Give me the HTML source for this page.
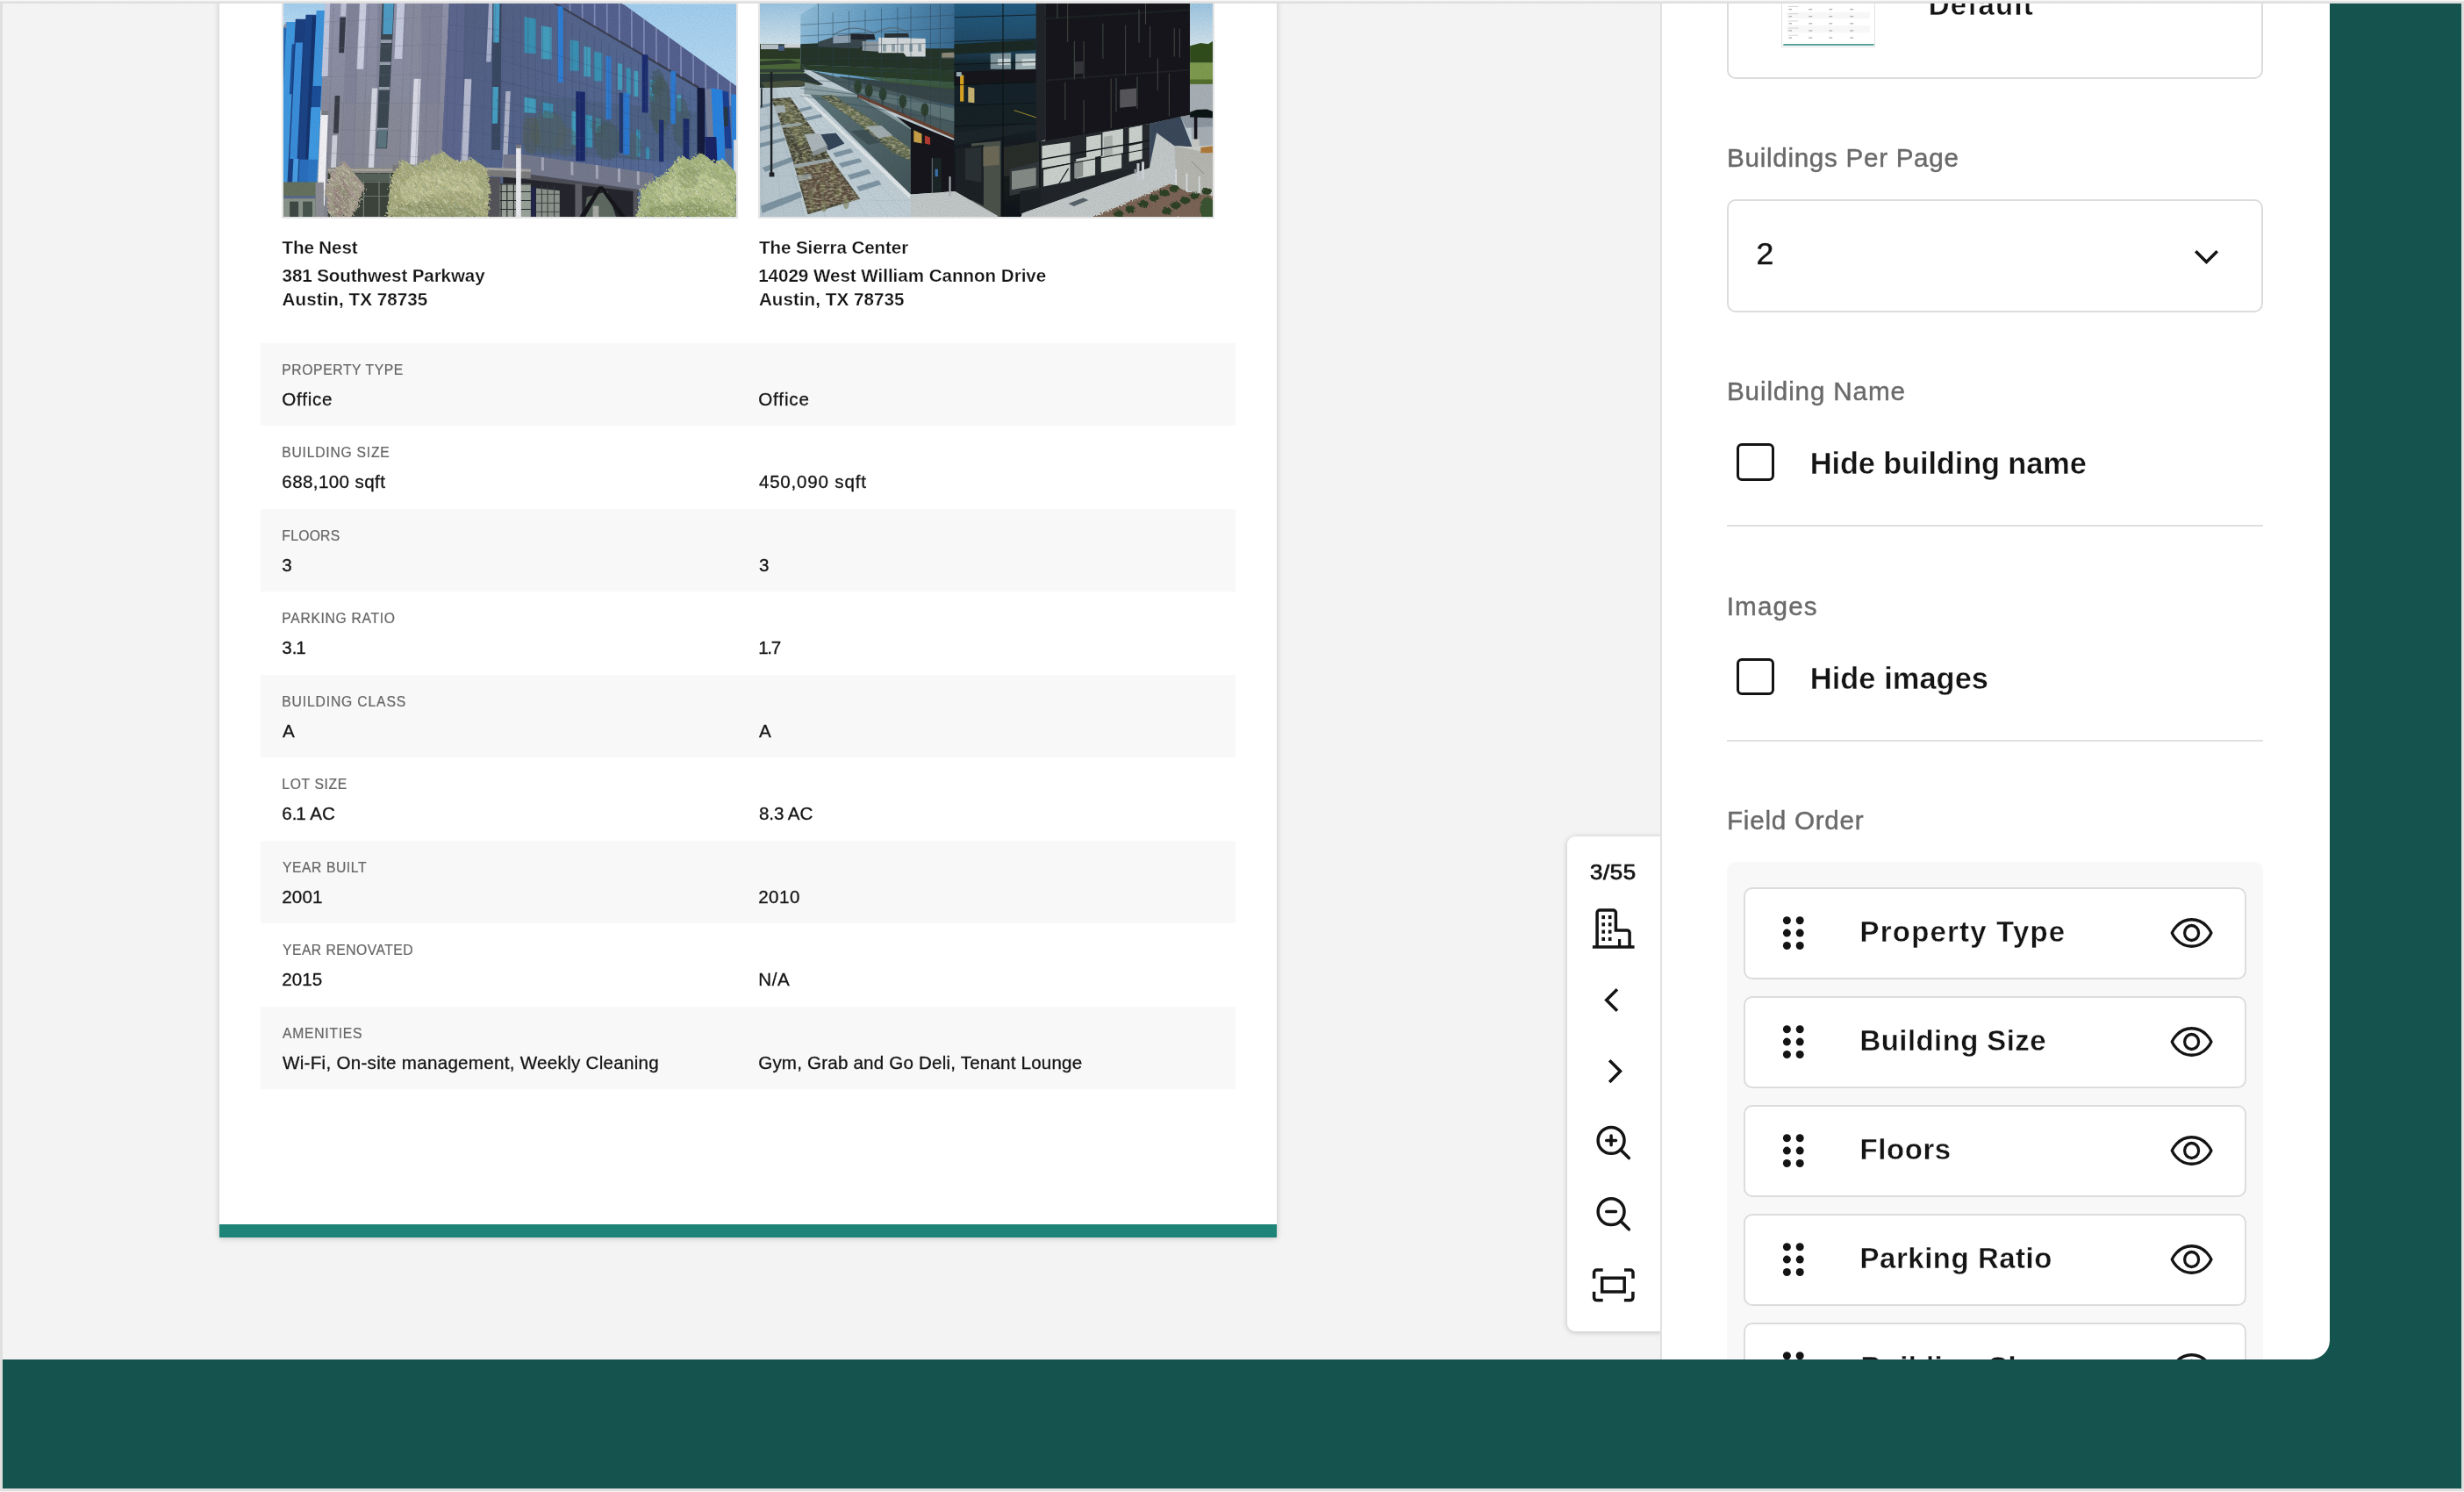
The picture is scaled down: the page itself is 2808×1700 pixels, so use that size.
<!DOCTYPE html>
<html lang="en"><head><meta charset="utf-8">
<title>Building comparison</title>
<style>
html,body{margin:0;padding:0}
body{width:2808px;height:1700px;position:relative;overflow:hidden;background:#dfdfdf;font-family:"Liberation Sans",sans-serif;color:#141414}
.a{position:absolute}
.t{position:absolute;white-space:nowrap;line-height:1}
.clip{position:absolute;overflow:hidden}
.in{position:absolute;left:0;top:0;width:2808px;height:1700px}
#green{left:3px;top:4px;width:2802px;height:1692px;background:#15544e}
#app{left:3px;top:4px;width:1889px;height:1545px;background:#f3f3f3}
#app>.in{left:-3px;top:-4px}
#panel{left:1892px;top:4px;width:763px;height:1545px;background:#fff;border-bottom-right-radius:22px}
#panel>.in{left:-1892px;top:-4px}
#pline{left:1891.6px;top:4px;width:2px;height:1545px;background:#e1e1e1}
#page{left:250px;top:-40px;width:1205px;height:1450px;background:#fff;box-shadow:0 1px 7px rgba(0,0,0,.2)}
#teal{left:250px;top:1395px;width:1205px;height:15px;background:#1f8478}
.row{left:297px;width:1111px;height:94.5px;background:#f8f8f8}
.frame{top:-40px;height:285px;width:516px;border:2px solid #e5e5e5;background:#8a93a8;overflow:hidden}
.frame svg{position:absolute;left:0;top:42px;display:block}
.box{border:2px solid #dcdcdc;border-radius:10px;background:#fff;box-sizing:border-box}
.cb{width:43.3px;height:42.6px;left:1979.2px;border:3.7px solid #141414;border-radius:6px;box-sizing:border-box}
.hr{left:1968px;width:611px;height:2px;background:#e0e0e0}
#tool{left:1786px;top:953px;width:120px;height:564px;background:#fff;border-radius:9px;box-shadow:0 1px 6px rgba(0,0,0,.22)}
svg.ic{position:absolute;left:0;top:0;overflow:visible}

</style></head>
<body>
<div class="a" style="left:0;top:0;width:2808px;height:4px;background:linear-gradient(#fafafa 0,#f4f4f4 22%,#e4e4e4 45%,#dedede 62%,#dedede 100%)"></div>
<div class="a" style="left:0;top:1699px;width:2808px;height:1px;background:#f4f4f4"></div>
<div class="a" id="green"></div>
<div class="clip" id="app"><div class="in">
  <div class="a" id="page"></div>
  <div class="a" id="teal"></div>
  <div class="a row" style="top:390.6px"></div>
  <div class="a row" style="top:579.6px"></div>
  <div class="a row" style="top:768.6px"></div>
  <div class="a row" style="top:957.6px"></div>
  <div class="a row" style="top:1146.6px"></div>
  <div class="a frame" style="left:321px"><svg width="516" height="243" viewBox="0 0 516 243">
<defs><linearGradient id="p1a" x1="0" y1="0" x2="0" y2="1"><stop offset="0" stop-color="#9194ad"/><stop offset="1" stop-color="#84868f"/></linearGradient><linearGradient id="p1b" x1="0" y1="0" x2="1" y2="0.4"><stop offset="0" stop-color="#566184"/><stop offset="1" stop-color="#546c9a"/></linearGradient><linearGradient id="p1s" x1="0" y1="0" x2="0" y2="1"><stop offset="0" stop-color="#a3cff0"/><stop offset="1" stop-color="#bcdff7"/></linearGradient><filter id="p1f" x="-5%" y="-5%" width="110%" height="110%"><feGaussianBlur stdDeviation="0.7"/></filter><filter id="p1n" x="0" y="0" width="100%" height="100%"><feTurbulence type="fractalNoise" baseFrequency="0.35" numOctaves="2" seed="3" result="n"/><feDisplacementMap in="SourceGraphic" in2="n" scale="9"/></filter><filter id="p1g" x="0" y="0" width="100%" height="100%"><feTurbulence type="fractalNoise" baseFrequency="0.9" numOctaves="2" seed="5"/><feColorMatrix type="matrix" values="0 0 0 0 0  0 0 0 0 0  0 0 0 0 0  1.2 0 0 0 -0.35"/></filter><filter id="p1m" x="0" y="0" width="100%" height="100%"><feTurbulence type="fractalNoise" baseFrequency="0.22" numOctaves="3" seed="2"/><feColorMatrix type="matrix" values="0 0 0 0 0.30  0 0 0 0 0.36  0 0 0 0 0.20  0 2.6 0 0 -1.05"/></filter><filter id="p1m2" x="0" y="0" width="100%" height="100%"><feTurbulence type="fractalNoise" baseFrequency="0.3" numOctaves="3" seed="9"/><feColorMatrix type="matrix" values="0 0 0 0 0.86  0 0 0 0 0.87  0 0 0 0 0.66  2.6 0 0 0 -1.15"/></filter></defs>
<g filter="url(#p1f)">
<rect x="-5" y="-5" width="526" height="253" fill="url(#p1a)"/>
<polygon points="73.3,-0.3 86.7,-0.3 80.8,187.1 67.4,187.1" fill="#83869c"/>
<polygon points="107.6,-0.3 112.6,-0.3 108.4,187.1 104.3,187.1" fill="#84879c"/>
<polygon points="139.5,-0.3 157.9,-0.3 148.7,187.1 134.4,187.1" fill="#8b8da1"/>
<polygon points="157.9,-0.3 181.3,-0.3 176.3,187.1 156.2,187.1" fill="#81849b"/>
<polygon points="52.3,113.3 179.7,113.3 179.7,187.1 52.3,187.1" fill="#8b8c99" opacity=".55"/>
<polygon points="188.9,-0.3 281.9,-0.3 281.9,197.1 179.7,187.9" fill="url(#p1b)"/>
<rect x="190" y="-5" width="330" height="253" fill="url(#p1b)"/>
<polygon points="188.9,-0.3 206.5,-0.3 203.1,187.1 179.7,187.9" fill="#5f6890"/>
<polygon points="-3.0,-4.0 50.3,-4.0 50.3,10.2 38.9,7.7 37.2,14.4 27.2,12.8 25.5,18.6 15.4,17.8 13.8,22.8 3.7,21.1 -3.0,29.5" fill="url(#p1s)"/>
<polygon points="-6.4,27.8 4.5,27.8 -4.2,203.8 -15.1,203.8" fill="#2a6cb8"/>
<polygon points="-6.4,103.3 2.0,103.3 -3.0,203.8 -11.3,203.8" fill="#1a3d7e"/>
<polygon points="3.7,21.1 13.8,21.1 4.7,203.8 -5.4,203.8" fill="#3f9ae2"/>
<polygon points="9.7,46.3 15.4,46.3 12.6,103.3 6.9,103.3" fill="#1d4f9a"/>
<polygon points="13.8,17.8 25.8,17.8 16.6,203.8 4.5,203.8" fill="#1a3f82"/>
<polygon points="13.8,44.6 22.1,44.6 15.6,177.0 7.2,177.0" fill="#3b8fdc"/>
<polygon points="11.4,177.0 20.5,177.0 19.1,203.8 10.1,203.8" fill="#4a9fe6"/>
<polygon points="25.5,12.8 37.7,12.8 28.3,203.8 16.0,203.8" fill="#1c4488"/>
<polygon points="33.0,14.4 37.7,14.4 28.3,203.8 23.6,203.8" fill="#173670"/>
<polygon points="18.5,177.8 30.5,177.8 29.2,203.8 17.2,203.8" fill="#2c6fc0"/>
<polygon points="37.7,8.1 48.1,8.1 38.4,203.8 28.0,203.8" fill="#3c95de"/>
<polygon points="33.0,94.0 43.1,94.0 41.9,118.3 31.8,118.3" fill="#1d4f9a"/>
<polygon points="31.4,118.3 41.9,118.3 39.0,177.8 28.4,177.8" fill="#3f9be4"/>
<polygon points="28.8,177.8 38.9,177.8 37.6,203.8 27.6,203.8" fill="#2e78c6"/>
<polygon points="-4.7,203.5 38.9,203.5 38.9,244.0 -4.7,244.0" fill="#66735f"/>
<polygon points="-4.7,218.9 36.4,218.9 36.4,222.2 -4.7,222.2" fill="#5a6a8a"/>
<polygon points="-4.7,222.2 36.4,222.2 36.4,244.0 -4.7,244.0" fill="#8b958c"/>
<polygon points="7.1,225.6 17.1,225.6 17.1,244.0 7.1,244.0" fill="#3f4a44"/>
<polygon points="22.1,225.6 33.0,225.6 33.0,244.0 22.1,244.0" fill="#4a5750"/>
<polygon points="47.3,-0.3 53.1,-0.3 50.6,83.1 43.6,83.1" fill="#c5c9de"/>
<polygon points="86.7,-0.3 94.5,-0.3 91.2,74.8 83.3,74.8" fill="#ccd0e2"/>
<polygon points="129.4,-0.3 138.1,-0.3 135.3,63.0 126.5,63.0" fill="#c8cce0"/>
<polygon points="65.7,-0.3 71.6,-0.3 70.9,14.4 65.0,14.4" fill="#c0c4d8"/>
<polygon points="100.9,96.6 107.1,96.6 103.0,187.1 96.8,187.1" fill="#d6d8e4"/>
<polygon points="148.7,85.7 156.5,85.7 152.1,183.7 144.3,183.7" fill="#dcdde8"/>
<polygon points="55.7,150.2 61.5,150.2 59.8,188.7 53.9,188.7" fill="#cfd1dc"/>
<polygon points="206.5,85.7 214.4,85.7 210.0,183.7 202.1,183.7" fill="#b9bdd2"/>
<polygon points="234.1,-0.3 239.5,-0.3 236.5,66.4 231.1,66.4" fill="#aab2cf"/>
<polygon points="253.4,99.9 258.8,99.9 254.8,188.7 249.4,188.7" fill="#aeb3c8"/>
<polygon points="64.4,15.8 71.1,15.8 69.1,56.3 63.2,56.3" fill="#383a48"/>
<polygon points="58.7,104.9 64.4,104.9 62.7,147.7 57.0,147.7" fill="#3a3c47"/>
<polygon points="112.6,-0.3 126.4,-0.3 118.0,165.3 105.9,165.3" fill="#3d4852"/>
<polygon points="114.3,-0.3 125.7,-0.3 124.0,34.9 113.3,34.9" fill="#4f9dc6"/>
<polygon points="110.8,41.2 123.8,41.2 123.4,44.9 110.5,44.9" fill="#9aa0b0"/>
<polygon points="109.8,66.4 122.5,66.4 122.2,70.1 109.5,70.1" fill="#9aa0b0"/>
<polygon points="108.7,94.9 121.1,94.9 120.8,98.6 108.3,98.6" fill="#9aa0b0"/>
<polygon points="106.8,141.8 118.8,141.8 118.4,145.5 106.5,145.5" fill="#9aa0b0"/>
<polygon points="107.6,143.5 118.0,143.5 117.3,164.4 106.8,164.4" fill="#5d7680"/>
<polygon points="238.3,-0.3 248.7,-0.3 247.0,166.9 237.0,166.9" fill="#3b4a63"/>
<polygon points="239.5,-0.3 246.4,-0.3 245.7,44.6 239.2,44.6" fill="#4ca2c8"/>
<polygon points="238.3,94.9 245.0,94.9 244.0,136.8 237.7,136.8" fill="#46a0c4"/>
<polygon points="307.3,-0.3 386.1,-0.3 516.0,94.0 516.0,103.3 473.2,96.6" fill="#566290"/>
<polygon points="307.3,-0.3 311.0,-0.3 473.6,94.5 472.9,97.2" fill="#3b3f52"/>
<polygon points="325.7,-0.3 327.4,0.7 327.4,9.7 325.7,7.7" fill="#8d99c2" opacity=".8"/>
<polygon points="339.8,-0.3 341.5,0.7 341.5,18.0 339.8,16.0" fill="#8d99c2" opacity=".8"/>
<polygon points="353.8,-0.3 355.5,0.7 355.5,26.3 353.8,24.3" fill="#8d99c2" opacity=".8"/>
<polygon points="367.9,-0.3 369.6,0.7 369.6,34.6 367.9,32.6" fill="#8d99c2" opacity=".8"/>
<polygon points="381.9,-0.3 383.6,0.7 383.6,42.9 381.9,40.9" fill="#8d99c2" opacity=".8"/>
<polygon points="396.0,6.9 397.7,7.9 397.7,51.2 396.0,49.2" fill="#8d99c2" opacity=".8"/>
<polygon points="410.0,17.1 411.7,18.1 411.7,59.5 410.0,57.5" fill="#8d99c2" opacity=".8"/>
<polygon points="424.1,27.3 425.8,28.3 425.8,67.8 424.1,65.8" fill="#8d99c2" opacity=".8"/>
<polygon points="438.2,37.4 439.8,38.5 439.8,76.1 438.2,74.1" fill="#8d99c2" opacity=".8"/>
<polygon points="452.2,47.6 453.9,48.6 453.9,84.4 452.2,82.3" fill="#8d99c2" opacity=".8"/>
<polygon points="466.3,57.8 467.9,58.8 467.9,92.6 466.3,90.6" fill="#8d99c2" opacity=".8"/>
<polygon points="480.3,68.0 482.0,69.0 482.0,100.9 480.3,98.9" fill="#8d99c2" opacity=".8"/>
<polygon points="494.4,78.2 496.0,79.2 496.0,109.2 494.4,107.2" fill="#8d99c2" opacity=".8"/>
<polygon points="508.4,88.4 510.1,89.4 510.1,117.5 508.4,115.5" fill="#8d99c2" opacity=".8"/>
<polygon points="386.1,-0.3 536.9,-0.3 536.9,110.0 515.1,93.2" fill="url(#p1s)"/>
<polygon points="386.1,-4.0 536.9,-4.0 536.9,1.0 386.1,1.0" fill="url(#p1s)"/>
<polygon points="273.8,103.3 473.2,123.4 473.2,180.3 273.8,172.0" fill="#4a5f78" opacity=".45"/>
<polygon points="274.6,15.3 288.0,17.6 288.0,57.2 274.6,56.3" fill="#3a93b6"/>
<polygon points="293.9,25.3 305.6,27.3 305.6,63.8 293.9,63.0" fill="#44a0c0"/>
<polygon points="326.6,41.2 336.6,43.0 336.6,77.1 326.6,76.4" fill="#3a93b6"/>
<polygon points="342.5,48.8 350.0,50.1 350.0,83.7 342.5,83.1" fill="#44a0c0"/>
<polygon points="353.9,54.7 363.4,56.3 363.4,88.8 353.9,88.2" fill="#3a93b6"/>
<polygon points="381.0,68.1 386.1,68.9 386.1,98.6 381.0,98.2" fill="#44a0c0"/>
<polygon points="390.8,73.1 396.1,74.0 396.1,103.6 390.8,103.3" fill="#3a93b6"/>
<polygon points="399.5,76.4 404.5,77.3 404.5,106.1 399.5,105.8" fill="#44a0c0"/>
<polygon points="417.9,86.5 423.3,87.4 423.3,112.0 417.9,111.6" fill="#3a93b6"/>
<polygon points="274.6,106.6 288.0,108.9 288.0,125.1 274.6,124.2" fill="#44a0c0"/>
<polygon points="295.6,112.5 307.3,114.5 307.3,130.9 295.6,130.1" fill="#3a93b6"/>
<polygon points="328.3,122.5 334.1,123.5 334.1,161.5 328.3,161.1" fill="#44a0c0"/>
<polygon points="344.2,126.7 352.1,128.1 352.1,164.1 344.2,163.6" fill="#3a93b6"/>
<polygon points="355.9,130.1 361.8,131.1 361.8,147.2 355.9,146.8" fill="#44a0c0"/>
<polygon points="402.0,143.5 406.5,144.2 406.5,174.8 402.0,174.5" fill="#3a93b6"/>
<polygon points="448.9,103.3 453.1,104.0 453.1,123.7 448.9,123.4" fill="#44a0c0"/>
<polygon points="412.9,163.6 417.1,164.3 417.1,177.3 412.9,177.0" fill="#3a93b6"/>
<g filter="url(#p1n)">
<ellipse cx="429.6" cy="116.7" rx="11.7" ry="33.5" fill="#46595a" opacity="0.7"/>
<ellipse cx="426.3" cy="89.8" rx="7.5" ry="15.1" fill="#46595a" opacity="0.55"/>
<ellipse cx="302.3" cy="146.8" rx="20.1" ry="23.5" fill="#53645f" opacity="0.55"/>
<ellipse cx="282.2" cy="150.2" rx="10.1" ry="21.8" fill="#556052" opacity="0.5"/>
<ellipse cx="369.3" cy="156.9" rx="15.1" ry="21.8" fill="#475a5e" opacity="0.6"/>
<ellipse cx="359.3" cy="140.1" rx="8.4" ry="11.7" fill="#475a5e" opacity="0.45"/>
<ellipse cx="453.1" cy="135.1" rx="10.1" ry="28.5" fill="#475b5c" opacity="0.55"/>
<ellipse cx="397.8" cy="163.6" rx="10.1" ry="15.1" fill="#4f6365" opacity="0.5"/>
<ellipse cx="322.4" cy="156.9" rx="11.7" ry="16.8" fill="#55665f" opacity="0.45"/>
</g>
<polygon points="312.7,2.7 318.7,3.7 318.7,90.3 312.7,89.8" fill="#2f80d8"/>
<polygon points="367.6,59.7 373.5,60.7 373.5,132.1 367.6,131.7" fill="#2f7fd6"/>
<polygon points="386.9,101.6 394.5,102.9 394.5,172.5 386.9,172.0" fill="#2c7ad2"/>
<polygon points="441.4,76.4 447.2,77.4 447.2,137.2 441.4,136.8" fill="#2e7cd4"/>
<polygon points="333.3,99.9 343.8,100.7 343.8,179.8 333.3,179.5" fill="#1b2c6c"/>
<polygon points="408.7,58.0 415.4,58.5 415.4,124.4 408.7,124.2" fill="#1c2f72"/>
<polygon points="428.0,132.6 433.3,133.0 433.3,180.5 428.0,180.3" fill="#1d2f70"/>
<polygon points="455.6,130.9 462.3,131.4 462.3,180.6 455.6,180.3" fill="#1e2e6a"/>
<polygon points="471.5,95.7 480.3,96.4 480.3,180.6 471.5,180.3" fill="#141a3e"/>
<polygon points="382.7,101.6 386.9,101.9 386.9,170.4 382.7,170.3" fill="#22396f"/>
<line x1="57.3" y1="-0.3" x2="49.8" y2="187.1" stroke="#6f7286" stroke-width="0.60" opacity="0.55"/>
<line x1="73.3" y1="-0.3" x2="65.7" y2="187.1" stroke="#6f7286" stroke-width="0.60" opacity="0.55"/>
<line x1="86.7" y1="-0.3" x2="79.1" y2="187.1" stroke="#6f7286" stroke-width="0.60" opacity="0.55"/>
<line x1="97.6" y1="-0.3" x2="90.0" y2="187.1" stroke="#6f7286" stroke-width="0.60" opacity="0.55"/>
<line x1="139.5" y1="-0.3" x2="131.9" y2="187.1" stroke="#6f7286" stroke-width="0.60" opacity="0.55"/>
<line x1="148.7" y1="-0.3" x2="141.1" y2="187.1" stroke="#6f7286" stroke-width="0.60" opacity="0.55"/>
<line x1="157.9" y1="-0.3" x2="150.3" y2="187.1" stroke="#6f7286" stroke-width="0.60" opacity="0.55"/>
<line x1="167.9" y1="-0.3" x2="160.4" y2="187.1" stroke="#6f7286" stroke-width="0.60" opacity="0.55"/>
<line x1="181.3" y1="-0.3" x2="173.8" y2="187.1" stroke="#6f7286" stroke-width="0.60" opacity="0.55"/>
<line x1="47.3" y1="21.1" x2="186.4" y2="14.4" stroke="#6f7286" stroke-width="0.60" opacity="0.5"/>
<line x1="47.3" y1="51.3" x2="186.4" y2="46.3" stroke="#6f7286" stroke-width="0.60" opacity="0.5"/>
<line x1="47.3" y1="83.1" x2="186.4" y2="79.8" stroke="#6f7286" stroke-width="0.60" opacity="0.5"/>
<line x1="47.3" y1="113.3" x2="186.4" y2="113.3" stroke="#6f7286" stroke-width="0.60" opacity="0.5"/>
<line x1="47.3" y1="143.5" x2="186.4" y2="146.0" stroke="#6f7286" stroke-width="0.60" opacity="0.5"/>
<line x1="47.3" y1="170.3" x2="186.4" y2="176.2" stroke="#6f7286" stroke-width="0.60" opacity="0.5"/>
<line x1="262.1" y1="3.0" x2="262.1" y2="172.0" stroke="#3f4a6e" stroke-width="0.60" opacity="0.55"/>
<line x1="270.4" y1="3.0" x2="270.4" y2="172.0" stroke="#3f4a6e" stroke-width="0.60" opacity="0.55"/>
<line x1="278.8" y1="3.0" x2="278.8" y2="172.7" stroke="#3f4a6e" stroke-width="0.60" opacity="0.55"/>
<line x1="287.2" y1="3.0" x2="287.2" y2="173.9" stroke="#3f4a6e" stroke-width="0.60" opacity="0.55"/>
<line x1="295.6" y1="3.0" x2="295.6" y2="175.2" stroke="#3f4a6e" stroke-width="0.60" opacity="0.55"/>
<line x1="304.0" y1="3.0" x2="304.0" y2="176.4" stroke="#3f4a6e" stroke-width="0.60" opacity="0.55"/>
<line x1="312.3" y1="12.3" x2="312.3" y2="177.6" stroke="#3f4a6e" stroke-width="0.60" opacity="0.55"/>
<line x1="320.7" y1="17.2" x2="320.7" y2="178.9" stroke="#3f4a6e" stroke-width="0.60" opacity="0.55"/>
<line x1="329.1" y1="22.0" x2="329.1" y2="180.1" stroke="#3f4a6e" stroke-width="0.60" opacity="0.55"/>
<line x1="337.5" y1="26.9" x2="337.5" y2="181.3" stroke="#3f4a6e" stroke-width="0.60" opacity="0.55"/>
<line x1="345.8" y1="31.8" x2="345.8" y2="182.6" stroke="#3f4a6e" stroke-width="0.60" opacity="0.55"/>
<line x1="354.2" y1="36.6" x2="354.2" y2="183.8" stroke="#3f4a6e" stroke-width="0.60" opacity="0.55"/>
<line x1="362.6" y1="41.5" x2="362.6" y2="185.0" stroke="#3f4a6e" stroke-width="0.60" opacity="0.55"/>
<line x1="371.0" y1="46.3" x2="371.0" y2="186.3" stroke="#3f4a6e" stroke-width="0.60" opacity="0.55"/>
<line x1="379.4" y1="51.2" x2="379.4" y2="187.5" stroke="#3f4a6e" stroke-width="0.60" opacity="0.55"/>
<line x1="387.7" y1="56.1" x2="387.7" y2="188.7" stroke="#3f4a6e" stroke-width="0.60" opacity="0.55"/>
<line x1="396.1" y1="60.9" x2="396.1" y2="190.0" stroke="#3f4a6e" stroke-width="0.60" opacity="0.55"/>
<line x1="404.5" y1="65.8" x2="404.5" y2="191.2" stroke="#3f4a6e" stroke-width="0.60" opacity="0.55"/>
<line x1="412.9" y1="70.6" x2="412.9" y2="192.4" stroke="#3f4a6e" stroke-width="0.60" opacity="0.55"/>
<line x1="421.3" y1="75.5" x2="421.3" y2="193.6" stroke="#3f4a6e" stroke-width="0.60" opacity="0.55"/>
<line x1="429.6" y1="80.4" x2="429.6" y2="194.9" stroke="#3f4a6e" stroke-width="0.60" opacity="0.55"/>
<line x1="438.0" y1="85.2" x2="438.0" y2="196.1" stroke="#3f4a6e" stroke-width="0.60" opacity="0.55"/>
<line x1="446.4" y1="90.1" x2="446.4" y2="197.3" stroke="#3f4a6e" stroke-width="0.60" opacity="0.55"/>
<line x1="454.8" y1="94.9" x2="454.8" y2="198.6" stroke="#3f4a6e" stroke-width="0.60" opacity="0.55"/>
<line x1="463.2" y1="99.8" x2="463.2" y2="199.8" stroke="#3f4a6e" stroke-width="0.60" opacity="0.55"/>
<line x1="471.5" y1="104.7" x2="471.5" y2="201.0" stroke="#3f4a6e" stroke-width="0.60" opacity="0.55"/>
<line x1="241.9" y1="36.2" x2="474.9" y2="111.6" stroke="#3f4a6e" stroke-width="0.60" opacity="0.5"/>
<line x1="241.9" y1="63.0" x2="474.9" y2="130.1" stroke="#3f4a6e" stroke-width="0.60" opacity="0.5"/>
<line x1="241.9" y1="86.5" x2="474.9" y2="146.8" stroke="#3f4a6e" stroke-width="0.60" opacity="0.5"/>
<line x1="241.9" y1="110.0" x2="474.9" y2="161.1" stroke="#3f4a6e" stroke-width="0.60" opacity="0.5"/>
<line x1="241.9" y1="136.8" x2="474.9" y2="175.3" stroke="#3f4a6e" stroke-width="0.60" opacity="0.5"/>
<line x1="241.9" y1="156.9" x2="474.9" y2="185.4" stroke="#3f4a6e" stroke-width="0.60" opacity="0.5"/>
<line x1="189.7" y1="-0.3" x2="184.7" y2="187.1" stroke="#4a5578" stroke-width="0.60" opacity="0.5"/>
<line x1="198.1" y1="-0.3" x2="193.1" y2="187.1" stroke="#4a5578" stroke-width="0.60" opacity="0.5"/>
<line x1="208.2" y1="-0.3" x2="203.1" y2="187.1" stroke="#4a5578" stroke-width="0.60" opacity="0.5"/>
<line x1="218.2" y1="-0.3" x2="213.2" y2="187.1" stroke="#4a5578" stroke-width="0.60" opacity="0.5"/>
<line x1="231.6" y1="-0.3" x2="226.6" y2="187.1" stroke="#4a5578" stroke-width="0.60" opacity="0.5"/>
<line x1="241.7" y1="-0.3" x2="236.7" y2="187.1" stroke="#4a5578" stroke-width="0.60" opacity="0.5"/>
<line x1="251.7" y1="-0.3" x2="246.7" y2="187.1" stroke="#4a5578" stroke-width="0.60" opacity="0.5"/>
<line x1="188.1" y1="24.5" x2="268.5" y2="32.0" stroke="#4a5578" stroke-width="0.60" opacity="0.5"/>
<line x1="188.1" y1="53.0" x2="268.5" y2="62.2" stroke="#4a5578" stroke-width="0.60" opacity="0.5"/>
<line x1="188.1" y1="83.1" x2="268.5" y2="93.2" stroke="#4a5578" stroke-width="0.60" opacity="0.5"/>
<line x1="188.1" y1="113.3" x2="268.5" y2="123.4" stroke="#4a5578" stroke-width="0.60" opacity="0.5"/>
<line x1="188.1" y1="143.5" x2="268.5" y2="153.5" stroke="#4a5578" stroke-width="0.60" opacity="0.5"/>
<line x1="188.1" y1="170.3" x2="268.5" y2="180.3" stroke="#4a5578" stroke-width="0.60" opacity="0.5"/>
<polygon points="480.3,98.2 488.3,96.6 491.7,151.9 483.3,153.5" fill="#76809c"/>
<polygon points="487.5,96.2 500.4,98.6 504.2,198.8 492.0,198.8" fill="#2b84e0"/>
<polygon points="500.4,99.6 507.1,100.7 510.9,165.3 503.4,165.3" fill="#1f3f94"/>
<polygon points="501.7,117.5 506.7,118.3 507.1,140.1 502.0,140.1" fill="#27384a"/>
<polygon points="510.1,103.3 516.0,104.1 516.0,212.2 512.1,212.2" fill="#2f86de"/>
<polygon points="480.3,151.9 493.3,151.9 495.0,197.1 481.6,193.8" fill="#1b2566"/>
<polygon points="250.3,172.0 273.8,172.0 422.1,193.8 422.1,212.5 407.9,212.5 250.3,190.4" fill="#767a8e"/>
<polygon points="293.9,174.9 296.9,175.4 296.9,190.8 293.9,190.3" fill="#a5a9ba"/>
<polygon points="327.4,179.9 330.4,180.4 330.4,195.8 327.4,195.3" fill="#a5a9ba"/>
<polygon points="355.9,184.0 358.9,184.5 358.9,200.0 355.9,199.5" fill="#a5a9ba"/>
<polygon points="381.0,187.7 384.1,188.2 384.1,203.7 381.0,203.2" fill="#a5a9ba"/>
<polygon points="402.8,190.9 405.8,191.4 405.8,206.9 402.8,206.4" fill="#a5a9ba"/>
<polygon points="250.3,190.4 407.9,212.5 403.7,214.7 250.3,197.9" fill="#4f5058"/>
<polygon points="250.3,197.6 403.7,214.4 403.7,244.0 250.3,244.0" fill="#26282d"/>
<polygon points="250.3,206.8 278.8,209.7 278.8,244.0 250.3,244.0" fill="#7d867f"/>
<polygon points="288.0,210.5 314.8,213.2 314.8,244.0 288.0,244.0" fill="#8d968e"/>
<polygon points="257.0,208.0 258.0,208.0 258.0,244.0 257.0,244.0" fill="#3a3d40"/>
<polygon points="263.7,208.0 264.7,208.0 264.7,244.0 263.7,244.0" fill="#3a3d40"/>
<polygon points="272.1,208.0 273.1,208.0 273.1,244.0 272.1,244.0" fill="#3a3d40"/>
<polygon points="293.9,208.0 294.9,208.0 294.9,244.0 293.9,244.0" fill="#3a3d40"/>
<polygon points="300.6,208.0 301.6,208.0 301.6,244.0 300.6,244.0" fill="#3a3d40"/>
<polygon points="308.1,208.0 309.1,208.0 309.1,244.0 308.1,244.0" fill="#3a3d40"/>
<polygon points="250.3,215.5 278.8,215.5 278.8,216.4 250.3,216.4" fill="#3f4244"/>
<polygon points="288.0,216.9 314.8,216.9 314.8,217.7 288.0,217.7" fill="#3f4244"/>
<polygon points="250.3,225.6 278.8,225.6 278.8,226.4 250.3,226.4" fill="#3f4244"/>
<polygon points="288.0,226.9 314.8,226.9 314.8,227.8 288.0,227.8" fill="#3f4244"/>
<polygon points="250.3,235.7 278.8,235.7 278.8,236.5 250.3,236.5" fill="#3f4244"/>
<polygon points="288.0,237.0 314.8,237.0 314.8,237.8 288.0,237.8" fill="#3f4244"/>
<polygon points="279.7,208.8 287.5,208.8 287.5,244.0 279.7,244.0" fill="#23284a"/>
<polygon points="332.4,205.8 340.3,205.8 340.3,244.0 332.4,244.0" fill="#5f6068"/>
<polygon points="398.6,212.2 403.7,212.2 403.7,244.0 398.6,244.0" fill="#55565e"/>
<polygon points="345.8,220.6 369.3,213.9 379.4,244.0 342.5,244.0" fill="#5f6a62"/>
<polygon points="336.6,244.0 359.3,208.5 363.9,208.5 343.3,244.0" fill="#18181c"/>
<polygon points="359.3,208.5 363.9,208.5 391.1,244.0 384.4,244.0" fill="#18181c"/>
<polygon points="352.6,230.6 359.3,230.6 359.3,244.0 352.6,244.0" fill="#a7aaa5"/>
<polygon points="50.6,187.1 126.0,187.1 126.0,193.1 50.6,193.1" fill="#8f8c88"/>
<polygon points="50.6,188.7 126.0,188.7 126.0,190.4 50.6,190.4" fill="#b5b2ab"/>
<polygon points="50.6,193.1 126.0,193.1 126.0,244.0 50.6,244.0" fill="#3c443d"/>
<polygon points="75.8,193.1 76.9,193.1 76.9,244.0 75.8,244.0" fill="#7c837a"/>
<polygon points="90.8,193.1 92.0,193.1 92.0,244.0 90.8,244.0" fill="#7c837a"/>
<polygon points="108.4,193.1 109.6,193.1 109.6,244.0 108.4,244.0" fill="#7c837a"/>
<polygon points="121.0,193.1 122.2,193.1 122.2,244.0 121.0,244.0" fill="#7c837a"/>
<polygon points="50.6,203.0 126.0,203.0 126.0,204.0 50.6,204.0" fill="#6f766e"/>
<polygon points="50.6,218.9 126.0,218.9 126.0,219.9 50.6,219.9" fill="#6f766e"/>
<polygon points="75.8,193.8 121.0,193.8 121.0,202.5 75.8,202.5" fill="#59635b"/>
<polygon points="124.4,183.7 281.9,189.1 281.9,199.6 124.4,190.4" fill="#7e7d7d"/>
<polygon points="147.8,183.4 281.9,188.7 281.9,191.7 147.8,186.0" fill="#a6a5a3"/>
<polygon points="231.6,197.9 247.5,197.9 247.5,244.0 231.6,244.0" fill="#55555c"/>
<polygon points="246.7,205.5 281.9,205.5 281.9,244.0 246.7,244.0" fill="#9aa39a"/>
<polygon points="247.5,205.5 248.7,205.5 248.7,244.0 247.5,244.0" fill="#2c2e33"/>
<polygon points="254.2,205.5 255.4,205.5 255.4,244.0 254.2,244.0" fill="#2c2e33"/>
<polygon points="261.8,205.5 263.0,205.5 263.0,244.0 261.8,244.0" fill="#2c2e33"/>
<polygon points="246.7,205.5 281.9,205.5 281.9,206.5 246.7,206.5" fill="#2c2e33"/>
<polygon points="246.7,213.9 281.9,213.9 281.9,214.9 246.7,214.9" fill="#2c2e33"/>
<polygon points="246.7,223.9 281.9,223.9 281.9,224.9 246.7,224.9" fill="#2c2e33"/>
<polygon points="246.7,234.0 281.9,234.0 281.9,235.0 246.7,235.0" fill="#2c2e33"/>
<polygon points="42.6,121.7 51.0,121.7 46.9,230.6 38.1,230.6" fill="#f3f3f8"/>
<polygon points="43.3,121.4 51.3,121.4 51.1,127.1 43.1,127.1" fill="#7d7d85"/>
<polygon points="36.6,203.8 45.9,203.8 45.9,244.0 36.6,244.0" fill="#8e8f97"/>
<polygon points="265.1,161.1 270.8,161.1 270.8,244.0 265.1,244.0" fill="#ececf3"/>
<polygon points="265.1,160.7 270.8,160.7 270.8,164.9 265.1,164.9" fill="#77777f"/>
<polygon points="513.1,155.2 516.0,155.2 516.0,212.2 513.1,212.2" fill="#dfe0ea"/>
</g>
<g filter="url(#p1n)">
<polygon points="52.3,244.0 47.3,213.9 54.0,192.1 69.1,178.7 80.8,193.8 93.4,208.8 85.0,230.6 78.3,244.0" fill="#a4958d"/>
<polygon points="57.3,244.0 55.7,213.9 67.4,197.1 75.8,213.9 72.4,244.0" fill="#8d7c76" opacity=".7"/>
<polygon points="116.8,244.0 123.5,197.1 136.1,177.8 147.8,185.4 164.6,177.8 181.3,168.6 198.1,180.3 214.9,176.2 232.5,188.7 235.8,213.9 232.5,244.0" fill="#a7a979"/>
<polygon points="131.1,205.5 156.2,193.8 189.7,188.7 219.9,197.1 228.3,218.9 198.1,213.9 164.6,218.9 139.5,230.6" fill="#c3c394" opacity=".8"/>
<polygon points="124.4,244.0 131.1,230.6 164.6,227.3 206.5,230.6 231.6,244.0" fill="#8f9468" opacity=".8"/>
<polygon points="402.0,244.0 407.0,212.5 421.3,201.8 436.3,192.9 453.1,172.8 463.2,178.7 474.9,169.5 490.0,180.3 500.0,176.2 516.8,193.8 516.8,244.0" fill="#a6b67b"/>
<polygon points="419.6,213.9 444.7,197.1 478.2,193.8 503.4,205.5 513.4,230.6 469.9,218.9 436.3,230.6" fill="#c2cd96" opacity=".8"/>
<polygon points="407.9,244.0 419.6,230.6 461.5,227.3 495.0,234.0 516.8,244.0" fill="#8a9b62" opacity=".8"/>
<polygon points="449.8,193.8 463.2,183.7 474.9,188.7 469.9,207.2 453.1,210.5" fill="#8d9d68" opacity=".6"/>
<clipPath id="p1bc"><polygon points="52.3,244.0 47.3,213.9 54.0,192.1 69.1,178.7 80.8,193.8 93.4,208.8 85.0,230.6 78.3,244.0" fill="#a4958d"/><polygon points="116.8,244.0 123.5,197.1 136.1,177.8 147.8,185.4 164.6,177.8 181.3,168.6 198.1,180.3 214.9,176.2 232.5,188.7 235.8,213.9 232.5,244.0" fill="#a7a979"/><polygon points="402.0,244.0 407.0,212.5 421.3,201.8 436.3,192.9 453.1,172.8 463.2,178.7 474.9,169.5 490.0,180.3 500.0,176.2 516.8,193.8 516.8,244.0" fill="#a6b67b"/></clipPath>
<g clip-path="url(#p1bc)"><rect width="516" height="243" filter="url(#p1m)" opacity=".75"/><rect width="516" height="243" filter="url(#p1m2)" opacity=".55"/></g>
</g>
<rect width="516" height="243" filter="url(#p1g)" opacity=".12"/>
</svg></div>
  <div class="a frame" style="left:864px"><svg width="516" height="243" viewBox="0 0 516 243">
<defs><linearGradient id="p2s" x1="0" y1="0" x2="0" y2="1"><stop offset="0" stop-color="#98c4e2"/><stop offset="1" stop-color="#d3e4ee"/></linearGradient><linearGradient id="p2g" x1="0" y1="0" x2="1" y2="0.25"><stop offset="0" stop-color="#93c0dc"/><stop offset="0.55" stop-color="#5d97bf"/><stop offset="1" stop-color="#3a6c93"/></linearGradient><linearGradient id="p2d" x1="0" y1="0" x2="0" y2="1"><stop offset="0" stop-color="#255f86"/><stop offset="0.22" stop-color="#1f4a66"/><stop offset="0.3" stop-color="#17262e"/><stop offset="1" stop-color="#11181a"/></linearGradient><linearGradient id="p2l" x1="0" y1="0" x2="1" y2="1"><stop offset="0" stop-color="#60787d"/><stop offset="1" stop-color="#43565a"/></linearGradient><filter id="p2f" x="-5%" y="-5%" width="110%" height="110%"><feGaussianBlur stdDeviation="0.7"/></filter><filter id="p2n" x="0" y="0" width="100%" height="100%"><feTurbulence type="fractalNoise" baseFrequency="0.5" numOctaves="2" seed="8" result="n"/><feDisplacementMap in="SourceGraphic" in2="n" scale="6"/></filter><filter id="p2gr" x="0" y="0" width="100%" height="100%"><feTurbulence type="fractalNoise" baseFrequency="0.9" numOctaves="2" seed="11"/><feColorMatrix type="matrix" values="0 0 0 0 0  0 0 0 0 0  0 0 0 0 0  1.2 0 0 0 -0.35"/></filter><filter id="p2m" x="0" y="0" width="100%" height="100%"><feTurbulence type="fractalNoise" baseFrequency="0.2 0.45" numOctaves="3" seed="4"/><feColorMatrix type="matrix" values="0 0 0 0 0.62  0 0 0 0 0.60  0 0 0 0 0.42  0 2.8 0 0 -1.15"/></filter><filter id="p2m2" x="0" y="0" width="100%" height="100%"><feTurbulence type="fractalNoise" baseFrequency="0.3" numOctaves="3" seed="14"/><feColorMatrix type="matrix" values="0 0 0 0 0.14  0 0 0 0 0.15  0 0 0 0 0.11  2.8 0 0 0 -1.2"/></filter></defs>
<g filter="url(#p2f)">
<rect x="-5" y="-5" width="526" height="253" fill="#c0ced5"/>
<polygon points="-4.0,-4.0 69.7,-4.0 69.7,48.0 -4.0,48.0" fill="url(#p2s)"/>
<polygon points="-4.0,46.3 27.8,46.3 46.3,49.3 46.3,64.7 -4.0,64.7" fill="#2b3b27"/>
<polygon points="1.0,46.6 21.1,46.6 21.1,52.1 1.0,52.1" fill="#b9c2c8"/>
<polygon points="27.8,46.3 46.3,46.3 46.3,50.5 27.8,50.5" fill="#d2d6d8"/>
<polygon points="21.1,48.0 27.8,48.0 27.8,53.8 21.1,53.8" fill="#4a5f86"/>
<polygon points="-4.0,63.0 46.3,63.0 50.5,79.8 -4.0,79.8" fill="#4d6a3a"/>
<polygon points="-4.0,66.4 32.9,63.9 46.3,68.1 -4.0,70.6" fill="#2f3d2f"/>
<polygon points="-4.0,74.8 49.6,74.8 51.3,78.1 -4.0,78.5" fill="#33423a"/>
<polygon points="-4.0,79.8 52.1,79.5 72.3,92.4 42.9,94.9 -4.0,96.9" fill="#2c3735"/>
<polygon points="1.0,89.8 42.9,87.3 69.7,92.4 6.1,96.2" fill="#4a5340"/>
<polygon points="-4.0,96.6 46.3,94.9 171.1,220.6 172.8,244.0 -4.0,244.0" fill="#c2d0d7"/>
<polygon points="-4.0,96.6 19.5,95.9 51.3,244.0 -4.0,244.0" fill="#b9c8d0"/>
<line x1="-1.0" y1="98.2" x2="3.7" y2="244.0" stroke="#9fb0b8" stroke-width="0.50" opacity=".6"/>
<line x1="4.7" y1="98.2" x2="27.6" y2="244.0" stroke="#9fb0b8" stroke-width="0.50" opacity=".6"/>
<line x1="10.3" y1="98.2" x2="51.5" y2="244.0" stroke="#9fb0b8" stroke-width="0.50" opacity=".6"/>
<line x1="16.0" y1="98.2" x2="75.4" y2="244.0" stroke="#9fb0b8" stroke-width="0.50" opacity=".6"/>
<line x1="21.6" y1="98.2" x2="99.2" y2="244.0" stroke="#9fb0b8" stroke-width="0.50" opacity=".6"/>
<line x1="27.3" y1="98.2" x2="123.1" y2="244.0" stroke="#9fb0b8" stroke-width="0.50" opacity=".6"/>
<line x1="33.0" y1="98.2" x2="147.0" y2="244.0" stroke="#9fb0b8" stroke-width="0.50" opacity=".6"/>
<line x1="38.6" y1="98.2" x2="170.9" y2="244.0" stroke="#9fb0b8" stroke-width="0.50" opacity=".6"/>
<line x1="44.3" y1="98.2" x2="194.8" y2="244.0" stroke="#9fb0b8" stroke-width="0.50" opacity=".6"/>
<line x1="-4.0" y1="110.0" x2="59.8" y2="106.6" stroke="#9fb0b8" stroke-width="0.50" opacity=".5"/>
<line x1="-4.0" y1="126.7" x2="76.6" y2="123.4" stroke="#9fb0b8" stroke-width="0.50" opacity=".5"/>
<line x1="-4.0" y1="146.8" x2="96.9" y2="143.5" stroke="#9fb0b8" stroke-width="0.50" opacity=".5"/>
<line x1="-4.0" y1="170.3" x2="120.5" y2="166.9" stroke="#9fb0b8" stroke-width="0.50" opacity=".5"/>
<line x1="-4.0" y1="197.1" x2="147.5" y2="193.8" stroke="#9fb0b8" stroke-width="0.50" opacity=".5"/>
<line x1="-4.0" y1="227.3" x2="177.9" y2="223.9" stroke="#9fb0b8" stroke-width="0.50" opacity=".5"/>
<polygon points="-4.0,116.7 21.1,111.6 22.8,114.1 -4.0,120.9" fill="#6b8494" opacity=".75"/>
<polygon points="-4.0,141.8 22.8,135.1 24.5,138.5 -4.0,146.8" fill="#6b8494" opacity=".75"/>
<polygon points="-4.0,160.2 27.8,152.7 29.5,156.0 -4.0,165.3" fill="#6b8494" opacity=".75"/>
<polygon points="2.7,187.1 39.6,173.6 41.2,178.7 6.1,192.1" fill="#6b8494" opacity=".75"/>
<polygon points="1.0,230.6 46.3,213.9 48.0,220.6 2.7,239.0" fill="#6b8494" opacity=".75"/>
<polygon points="83.1,170.3 103.3,165.3 106.6,169.5 86.5,175.3" fill="#6b8494" opacity=".75"/>
<polygon points="89.8,182.0 113.3,176.2 116.7,180.3 93.2,187.1" fill="#6b8494" opacity=".75"/>
<polygon points="99.9,195.4 123.4,188.7 126.7,193.4 103.3,200.8" fill="#6b8494" opacity=".75"/>
<polygon points="110.0,208.8 135.1,201.3 138.5,206.3 113.3,213.9" fill="#6b8494" opacity=".75"/>
<polygon points="44.6,120.0 58.0,117.0 59.7,120.0 46.3,123.4" fill="#6b8494" opacity=".75"/>
<polygon points="51.3,130.1 69.7,125.9 71.4,129.2 53.0,133.8" fill="#6b8494" opacity=".75"/>
<polygon points="12.8,108.6 34.9,107.3 62.2,146.8 80.6,176.2 114.1,222.6 54.7,240.3 37.9,180.3 19.5,123.4" fill="#403f30"/>
<polygon points="16.1,111.6 33.7,110.0 59.7,148.5 46.3,163.6 22.8,126.7" fill="#5c6044"/>
<polygon points="41.2,183.7 79.8,177.8 111.6,221.4 56.3,237.3" fill="#5a4a3a"/>
<ellipse cx="29.5" cy="118.3" rx="3.4" ry="7.0" fill="#77784f" opacity=".55"/>
<ellipse cx="36.2" cy="130.1" rx="3.4" ry="7.0" fill="#77784f" opacity=".55"/>
<ellipse cx="41.2" cy="143.5" rx="3.4" ry="7.0" fill="#77784f" opacity=".55"/>
<ellipse cx="46.3" cy="156.9" rx="3.4" ry="7.0" fill="#77784f" opacity=".55"/>
<ellipse cx="51.3" cy="173.6" rx="3.4" ry="7.0" fill="#77784f" opacity=".55"/>
<ellipse cx="46.3" cy="188.7" rx="3.4" ry="7.0" fill="#77784f" opacity=".55"/>
<ellipse cx="66.4" cy="185.4" rx="3.4" ry="7.0" fill="#77784f" opacity=".55"/>
<ellipse cx="83.1" cy="197.1" rx="3.4" ry="7.0" fill="#77784f" opacity=".55"/>
<ellipse cx="71.4" cy="210.5" rx="3.4" ry="7.0" fill="#77784f" opacity=".55"/>
<ellipse cx="58.0" cy="218.9" rx="3.4" ry="7.0" fill="#77784f" opacity=".55"/>
<ellipse cx="89.8" cy="215.5" rx="3.4" ry="7.0" fill="#77784f" opacity=".55"/>
<ellipse cx="98.2" cy="227.3" rx="3.4" ry="7.0" fill="#77784f" opacity=".55"/>
<ellipse cx="73.1" cy="230.6" rx="3.4" ry="7.0" fill="#77784f" opacity=".55"/>
<ellipse cx="59.7" cy="230.6" rx="3.4" ry="7.0" fill="#77784f" opacity=".55"/>
<polygon points="23.7,138.5 46.3,135.9 48.0,138.5 25.3,141.5" fill="#9aa6a8"/>
<polygon points="37.9,183.7 79.8,176.2 81.5,179.5 39.9,187.4" fill="#9ea9ab"/>
<polygon points="41.2,196.3 58.0,193.8 59.7,199.6 43.8,202.5" fill="#8e999c"/>
<polygon points="69.7,149.3 86.5,147.7 96.2,159.4 78.1,167.3" fill="#36465a"/>
<polygon points="51.0,149.3 68.4,147.7 76.8,161.9 59.7,169.0" fill="#aeb8bc"/>
<polygon points="59.7,169.0 76.8,161.9 77.1,166.9 60.4,173.6" fill="#8b9598"/>
<polygon points="16.9,116.7 27.8,115.8 29.5,123.4 18.6,125.0" fill="#a6b2b6"/>
<polygon points="46.3,103.3 50.0,103.3 172.3,217.6 170.3,221.9" fill="#e2e8ea"/>
<polygon points="50.0,96.6 111.6,104.1 172.0,141.8 172.0,217.6" fill="url(#p2l)"/>
<polygon points="51.3,89.8 111.6,103.3 172.0,140.1 172.0,143.5 111.6,106.6 50.0,103.3" fill="#8ea2a6"/>
<polygon points="68.4,105.3 83.1,104.1 123.4,130.1 171.1,165.3 171.1,178.7 151.9,170.3 103.3,130.1" fill="#4c5740"/>
<polygon points="79.8,113.3 123.4,143.5 163.6,172.0 171.1,176.2 171.1,165.3 123.4,130.1 89.8,111.6" fill="#6d7452" opacity=".8"/>
<polygon points="120.9,140.1 138.5,139.3 151.0,150.2 135.1,153.5" fill="#a3aeb0"/>
<polygon points="103.3,145.2 120.9,143.5 140.1,157.7 123.4,161.1" fill="#3d4c52" opacity=".8"/>
<polygon points="46.3,12.8 66.4,-0.3 66.4,-5.7 222.6,-5.7 222.6,152.7 111.6,104.6 46.3,68.9" fill="url(#p2g)"/>
<polygon points="46.3,46.3 83.1,44.6 146.8,51.3 222.6,51.3 222.6,76.4 46.3,69.7" fill="#25342a"/>
<polygon points="66.4,43.8 89.8,36.2 113.3,34.5 123.4,39.6 113.3,51.3 66.4,49.6" fill="#3b4850"/>
<polygon points="103.3,34.2 130.1,34.9 131.7,41.2 103.3,40.9" fill="#23282e"/>
<polygon points="141.8,34.2 168.6,33.9 170.3,38.2 141.8,38.9" fill="#2a3036"/>
<polygon points="83.1,37.1 103.3,36.2 103.3,44.6 83.1,45.4" fill="#8fa3b4"/>
<polygon points="135.1,38.7 188.7,39.9 188.7,60.5 166.9,60.5 163.6,56.3 135.1,56.3" fill="#d5dadd"/>
<polygon points="116.7,42.9 135.1,42.9 135.1,54.7 116.7,53.8" fill="#8f9aa3"/>
<polygon points="140.1,46.3 143.8,46.3 143.8,54.7 140.1,54.7" fill="#8ea0a8"/>
<polygon points="150.2,46.3 153.9,46.3 153.9,54.7 150.2,54.7" fill="#8ea0a8"/>
<polygon points="160.2,46.3 163.9,46.3 163.9,54.7 160.2,54.7" fill="#8ea0a8"/>
<polygon points="170.3,46.3 174.0,46.3 174.0,54.7 170.3,54.7" fill="#8ea0a8"/>
<polygon points="180.3,46.3 184.0,46.3 184.0,54.7 180.3,54.7" fill="#8ea0a8"/>
<polygon points="207.2,56.3 222.6,55.5 222.6,62.2 207.2,62.2" fill="#8f8a78"/>
<path d="M83.1 36.2 Q104.9 21.1 130.1 34.2" fill="none" stroke="#5c7486" stroke-width="1.2"/>
<path d="M130.1 34.2 Q151.9 21.1 170.3 33.9" fill="none" stroke="#5c7486" stroke-width="1.2"/>
<polygon points="46.3,69.7 222.6,76.4 222.6,89.8 113.3,83.1 46.3,74.8" fill="#2b3d2b"/>
<polygon points="89.8,83.1 222.6,96.6 222.6,116.7 103.3,93.2" fill="#39464a"/>
<polygon points="113.3,83.1 222.6,89.8 222.6,98.2 146.8,89.8" fill="#3c5530" opacity=".8"/>
<polygon points="51.3,74.8 113.3,89.8 222.6,118.3 222.6,151.9 111.6,104.6 46.3,70.6" fill="#485c60"/>
<polygon points="103.3,94.0 222.6,120.0 222.6,135.1 123.4,106.6" fill="#6f878b" opacity=".6"/>
<ellipse cx="111.6" cy="94.9" rx="4.4" ry="7.5" fill="#2f4230"/>
<line x1="111.6" y1="94.9" x2="111.6" y2="108.3" stroke="#2c3430" stroke-width="0.80"/>
<ellipse cx="124.2" cy="99.1" rx="4.4" ry="7.5" fill="#2f4230"/>
<line x1="124.2" y1="99.1" x2="124.2" y2="112.5" stroke="#2c3430" stroke-width="0.80"/>
<ellipse cx="140.1" cy="103.3" rx="4.4" ry="7.5" fill="#2f4230"/>
<line x1="140.1" y1="103.3" x2="140.1" y2="116.7" stroke="#2c3430" stroke-width="0.80"/>
<ellipse cx="162.8" cy="111.6" rx="4.4" ry="7.5" fill="#2f4230"/>
<line x1="162.8" y1="111.6" x2="162.8" y2="125.0" stroke="#2c3430" stroke-width="0.80"/>
<ellipse cx="187.9" cy="120.9" rx="4.4" ry="7.5" fill="#2f4230"/>
<line x1="187.9" y1="120.9" x2="187.9" y2="134.3" stroke="#2c3430" stroke-width="0.80"/>
<polygon points="111.6,103.3 222.6,150.5 222.6,154.4 111.6,106.6" fill="#6b4230"/>
<polygon points="155.2,128.4 222.6,156.5 222.6,165.6 172.0,142.1" fill="#15191c"/>
<line x1="66.4" y1="-0.3" x2="66.4" y2="80.0" stroke="#2c4452" stroke-width="0.70" opacity=".7"/>
<line x1="83.1" y1="10.0" x2="83.1" y2="89.2" stroke="#2c4452" stroke-width="0.70" opacity=".7"/>
<line x1="101.6" y1="8.7" x2="101.6" y2="99.3" stroke="#2c4452" stroke-width="0.70" opacity=".7"/>
<line x1="120.0" y1="7.3" x2="120.0" y2="108.2" stroke="#2c4452" stroke-width="0.70" opacity=".7"/>
<line x1="138.5" y1="5.9" x2="138.5" y2="116.1" stroke="#2c4452" stroke-width="0.70" opacity=".7"/>
<line x1="156.9" y1="4.6" x2="156.9" y2="124.1" stroke="#2c4452" stroke-width="0.70" opacity=".7"/>
<line x1="172.0" y1="3.5" x2="172.0" y2="130.5" stroke="#2c4452" stroke-width="0.70" opacity=".7"/>
<line x1="194.6" y1="1.8" x2="194.6" y2="140.3" stroke="#2c4452" stroke-width="0.70" opacity=".7"/>
<line x1="205.5" y1="1.0" x2="205.5" y2="145.0" stroke="#2c4452" stroke-width="0.70" opacity=".7"/>
<line x1="46.3" y1="24.5" x2="222.6" y2="12.8" stroke="#2c4452" stroke-width="0.70" opacity=".6"/>
<line x1="46.3" y1="37.1" x2="222.6" y2="27.8" stroke="#2c4452" stroke-width="0.70" opacity=".6"/>
<line x1="46.3" y1="49.6" x2="222.6" y2="44.6" stroke="#2c4452" stroke-width="0.70" opacity=".6"/>
<line x1="46.3" y1="63.0" x2="222.6" y2="61.4" stroke="#2c4452" stroke-width="0.70" opacity=".6"/>
<line x1="46.3" y1="74.8" x2="222.6" y2="79.8" stroke="#2c4452" stroke-width="0.70" opacity=".6"/>
<line x1="46.3" y1="86.5" x2="222.6" y2="98.2" stroke="#2c4452" stroke-width="0.70" opacity=".6"/>
<line x1="46.3" y1="96.6" x2="222.6" y2="116.7" stroke="#2c4452" stroke-width="0.70" opacity=".6"/>
<line x1="46.3" y1="104.9" x2="222.6" y2="135.1" stroke="#2c4452" stroke-width="0.70" opacity=".6"/>
<polygon points="172.0,141.5 222.6,164.9 222.6,213.9 172.0,217.6" fill="#14171a"/>
<polygon points="175.3,144.3 184.5,148.5 184.5,159.4 175.3,157.7" fill="#c9a14a"/>
<polygon points="187.9,150.2 194.1,152.7 194.1,161.1 187.9,159.4" fill="#b43a30"/>
<polygon points="196.3,176.2 206.8,175.3 206.8,215.5 196.3,216.9" fill="#1f2528"/>
<line x1="196.3" y1="176.2" x2="196.3" y2="216.9" stroke="#70787c" stroke-width="1.00"/>
<polygon points="199.6,188.7 203.0,188.7 203.0,197.1 199.6,197.1" fill="#3a6fa8"/>
<polygon points="221.5,-5.7 320.0,-5.7 320.0,212.5 296.6,244.0 221.5,244.0" fill="url(#p2d)"/>
<polygon points="221.5,46.3 314.7,41.2 314.7,53.0 221.5,58.3" fill="#1d2a26"/>
<polygon points="262.7,57.2 286.2,56.3 286.2,74.8 262.7,74.8" fill="#7f959c"/>
<polygon points="291.2,57.2 314.3,56.7 314.3,75.6 291.2,75.6" fill="#9fb1b6"/>
<polygon points="271.1,63.0 285.4,62.7 285.4,69.7 271.1,70.1" fill="#c9d6d8"/>
<polygon points="298.8,63.0 314.0,62.7 314.0,70.6 298.8,70.9" fill="#cfdadb"/>
<polygon points="221.5,77.8 314.7,74.8 314.7,89.8 221.5,93.5" fill="#12181a"/>
<polygon points="228.1,81.5 232.3,81.5 232.3,111.6 228.1,111.6" fill="#dba520"/>
<polygon points="237.3,94.9 244.4,96.6 244.4,113.3 237.3,112.5" fill="#c9b472"/>
<polygon points="223.9,78.1 229.8,78.1 229.8,83.1 223.9,83.1" fill="#9bb0b6"/>
<line x1="289.5" y1="121.7" x2="315.5" y2="130.1" stroke="#b99a2a" stroke-width="0.90"/>
<polygon points="221.5,146.8 318.0,135.1 318.0,143.5 221.5,161.9" fill="#1c2629"/>
<polygon points="240.9,159.4 274.5,156.5 274.5,244.0 240.9,244.0" fill="#4b524c"/>
<polygon points="222.6,165.3 254.9,161.1 254.9,230.6 222.6,213.9" fill="#1b2225"/>
<polygon points="234.0,165.3 252.4,163.6 252.4,203.8 234.0,200.5" fill="#2a3335"/>
<polygon points="254.4,163.6 272.8,161.9 272.8,183.7 254.4,185.4" fill="#6d6a58"/>
<polygon points="277.8,163.6 318.0,156.9 318.0,193.8 277.8,197.1" fill="#2a2d2b"/>
<polygon points="284.5,188.7 318.0,180.3 318.0,212.2 284.5,218.9" fill="#30383a"/>
<line x1="221.5" y1="15.8" x2="318.0" y2="12.8" stroke="#0e1416" stroke-width="1.00" opacity=".8"/>
<line x1="221.5" y1="43.4" x2="318.0" y2="40.4" stroke="#0e1416" stroke-width="1.00" opacity=".8"/>
<line x1="221.5" y1="69.4" x2="318.0" y2="66.4" stroke="#0e1416" stroke-width="1.00" opacity=".8"/>
<line x1="221.5" y1="92.9" x2="318.0" y2="89.8" stroke="#0e1416" stroke-width="1.00" opacity=".8"/>
<line x1="221.5" y1="116.3" x2="318.0" y2="113.3" stroke="#0e1416" stroke-width="1.00" opacity=".8"/>
<line x1="221.5" y1="139.8" x2="318.0" y2="136.8" stroke="#0e1416" stroke-width="1.00" opacity=".8"/>
<line x1="277.0" y1="-5.7" x2="277.0" y2="244.0" stroke="#0e1416" stroke-width="1.20" opacity=".85"/>
<polygon points="314.7,-5.7 325.1,-5.7 325.1,155.2 319.7,157.2 314.7,157.2" fill="#22282c"/>
<polygon points="325.1,-5.7 490.1,-5.7 490.1,127.1 444.1,137.1 325.1,157.2" fill="#17191d"/>
<polygon points="325.1,16.1 490.1,6.1 490.1,8.6 325.1,18.6" fill="#1d2024"/>
<polygon points="325.1,86.5 490.1,74.8 490.1,76.4 325.1,88.5" fill="#202327"/>
<polygon points="410.2,98.2 429.0,96.6 429.0,117.0 410.2,118.7" fill="#58595b"/>
<polygon points="358.3,66.4 368.3,65.7 368.3,79.8 358.3,80.6" fill="#34363a"/>
<line x1="339.0" y1="-0.3" x2="339.0" y2="16.9" stroke="#4c4e49" stroke-width="0.90"/>
<line x1="350.7" y1="-0.3" x2="350.7" y2="43.8" stroke="#4c4e49" stroke-width="0.90"/>
<line x1="358.3" y1="42.9" x2="358.3" y2="86.5" stroke="#4c4e49" stroke-width="0.90"/>
<line x1="369.1" y1="42.9" x2="369.1" y2="85.7" stroke="#4c4e49" stroke-width="0.90"/>
<line x1="390.9" y1="22.8" x2="390.9" y2="63.0" stroke="#4c4e49" stroke-width="0.90"/>
<line x1="416.6" y1="24.5" x2="416.6" y2="81.5" stroke="#4c4e49" stroke-width="0.90"/>
<line x1="432.0" y1="6.9" x2="432.0" y2="44.6" stroke="#4c4e49" stroke-width="0.90"/>
<line x1="439.5" y1="-0.3" x2="439.5" y2="23.7" stroke="#4c4e49" stroke-width="0.90"/>
<line x1="444.6" y1="26.2" x2="444.6" y2="61.4" stroke="#4c4e49" stroke-width="0.90"/>
<line x1="453.4" y1="62.2" x2="453.4" y2="99.1" stroke="#4c4e49" stroke-width="0.90"/>
<line x1="466.4" y1="79.8" x2="466.4" y2="128.4" stroke="#4c4e49" stroke-width="0.90"/>
<line x1="472.2" y1="27.8" x2="472.2" y2="60.5" stroke="#4c4e49" stroke-width="0.90"/>
<line x1="478.4" y1="28.7" x2="478.4" y2="61.4" stroke="#4c4e49" stroke-width="0.90"/>
<line x1="347.9" y1="89.8" x2="347.9" y2="132.6" stroke="#4c4e49" stroke-width="0.90"/>
<line x1="369.1" y1="110.0" x2="369.1" y2="147.7" stroke="#4c4e49" stroke-width="0.90"/>
<line x1="400.2" y1="85.7" x2="400.2" y2="141.8" stroke="#4c4e49" stroke-width="0.90"/>
<line x1="406.0" y1="84.8" x2="406.0" y2="123.4" stroke="#4c4e49" stroke-width="0.90"/>
<line x1="430.0" y1="83.1" x2="430.0" y2="120.0" stroke="#4c4e49" stroke-width="0.90"/>
<polygon points="320.0,157.2 444.1,137.1 444.1,185.7 296.6,239.3 296.6,213.9 320.0,212.2" fill="#252c2d"/>
<polygon points="321.4,162.2 353.6,157.7 353.6,182.0 321.4,187.4" fill="#ccd3ce"/>
<polygon points="323.1,189.6 353.6,182.9 353.6,204.6 334.8,210.5 323.1,210.5" fill="#ccd3ce"/>
<polygon points="372.0,151.9 388.8,149.3 388.8,173.6 372.0,177.0" fill="#ccd3ce"/>
<polygon points="390.4,146.8 413.9,142.8 413.9,170.3 390.4,174.6" fill="#ccd3ce"/>
<polygon points="420.6,141.8 435.7,138.8 435.7,157.2 420.6,160.2" fill="#ccd3ce"/>
<polygon points="420.6,162.2 435.7,158.9 435.7,177.0 420.6,180.3" fill="#ccd3ce"/>
<polygon points="360.3,177.3 382.1,173.0 382.1,195.4 360.3,199.8" fill="#ccd3ce"/>
<polygon points="388.8,174.0 412.2,169.0 412.2,187.4 388.8,192.4" fill="#ccd3ce"/>
<polygon points="358.3,180.3 368.3,178.7 368.3,197.1 358.3,199.6" fill="#8d9492"/>
<polygon points="391.8,151.9 401.8,150.2 401.8,173.6 391.8,174.6" fill="#aeb4b0"/>
<polygon points="287.0,191.2 314.7,187.1 314.7,207.2 287.0,212.2" fill="#9ba29c" opacity=".8"/>
<line x1="338.1" y1="209.7" x2="351.6" y2="187.9" stroke="#1a1e20" stroke-width="1.20"/>
<line x1="320.0" y1="177.8" x2="444.1" y2="156.0" stroke="#15191b" stroke-width="1.60"/>
<line x1="321.4" y1="188.4" x2="444.1" y2="165.3" stroke="#15191b" stroke-width="1.00"/>
<polygon points="296.6,213.9 444.1,184.0 444.1,187.4 298.3,239.3" fill="#22282a"/>
<polygon points="296.6,213.9 320.0,212.2 320.0,230.6 296.6,239.3" fill="#1d2325"/>
<polygon points="298.3,239.3 444.1,187.1 452.1,146.8 472.6,162.2 472.6,212.2 378.7,244.0 298.3,244.0" fill="#c4c9c9"/>
<polygon points="444.1,137.1 479.3,128.7 492.7,163.6 472.6,162.2 452.1,147.2 444.1,185.7" fill="#3b495b"/>
<polygon points="490.1,91.5 519.1,91.5 519.1,162.2 492.7,162.2 490.1,127.1" fill="#a9b1b7"/>
<polygon points="479.3,128.7 490.1,127.1 519.1,130.1 519.1,140.1 485.6,141.8" fill="#8e98a2"/>
<polygon points="490.1,-5.7 519.1,-5.7 519.1,48.3 490.1,48.3" fill="url(#p2s)"/>
<polygon points="490.1,48.3 502.4,44.9 510.8,46.3 519.1,40.9 519.1,67.7 490.1,67.7" fill="#304d1f"/>
<polygon points="490.1,67.4 519.1,67.4 519.1,90.7 490.1,90.7" fill="#7f9c4f"/>
<polygon points="490.1,86.5 519.1,86.5 519.1,91.9 490.1,91.9" fill="#55702f"/>
<polygon points="490.1,123.7 497.7,121.0 509.4,120.4 519.1,124.0 519.1,130.4 490.1,129.4" fill="#0f1317"/>
<polygon points="494.8,128.7 498.4,128.7 498.4,154.9 494.8,154.9" fill="#14171b"/>
<polygon points="492.3,154.4 500.7,154.4 500.7,163.6 492.3,163.3" fill="#c9cbc6"/>
<polygon points="472.6,162.2 519.1,171.6 519.1,219.7 474.2,210.8" fill="#b8b8b2"/>
<polygon points="472.6,161.9 494.3,163.6 519.1,161.1 519.1,171.6" fill="#d2d2cc"/>
<polygon points="502.4,163.9 519.1,161.9 519.1,170.3 502.4,170.3" fill="#b07a3a"/>
<line x1="474.2" y1="188.7" x2="474.2" y2="210.5" stroke="#dde3e6" stroke-width="1.60"/>
<line x1="486.5" y1="193.8" x2="486.5" y2="213.9" stroke="#dde3e6" stroke-width="1.60"/>
<line x1="500.7" y1="197.1" x2="500.7" y2="215.5" stroke="#dde3e6" stroke-width="1.60"/>
<line x1="492.3" y1="180.3" x2="505.7" y2="193.8" stroke="#8a9298" stroke-width="1.00"/>
<polygon points="172.0,217.6 222.6,213.9 270.8,241.7 270.8,244.0 172.0,244.0" fill="#c3c9c9"/>
<polygon points="215.5,197.1 217.6,197.1 217.6,219.7 215.5,219.7" fill="#aab0b4"/>
<polygon points="429.5,182.0 432.5,182.0 432.5,202.5 429.5,202.5" fill="#c9cdd1"/>
<polygon points="435.0,180.3 438.0,180.3 438.0,200.8 435.0,200.8" fill="#d1d4d8"/>
<polygon points="426.6,188.7 429.0,188.7 429.0,193.8 426.6,193.8" fill="#8f9499"/>
<polygon points="351.6,228.1 368.3,221.4 374.5,223.9 357.8,231.0" fill="#59636b"/>
</g>
<g filter="url(#p2n)">
<polygon points="378.7,244.0 467.5,205.5 486.0,213.9 519.1,219.7 519.1,244.0" fill="#7b6556"/>
<ellipse cx="472.2" cy="210.8" rx="5.7" ry="4.0" fill="#2d4226"/>
<ellipse cx="460.5" cy="215.9" rx="5.7" ry="4.0" fill="#2d4226"/>
<ellipse cx="449.6" cy="221.6" rx="5.7" ry="4.0" fill="#2d4226"/>
<ellipse cx="437.0" cy="228.3" rx="5.7" ry="4.0" fill="#2d4226"/>
<ellipse cx="421.9" cy="234.3" rx="5.7" ry="4.0" fill="#2d4226"/>
<ellipse cx="408.5" cy="239.3" rx="5.7" ry="4.0" fill="#2d4226"/>
<ellipse cx="484.8" cy="224.3" rx="5.7" ry="4.0" fill="#2d4226"/>
<ellipse cx="473.9" cy="230.0" rx="5.7" ry="4.0" fill="#2d4226"/>
<ellipse cx="463.8" cy="236.7" rx="5.7" ry="4.0" fill="#2d4226"/>
<ellipse cx="495.7" cy="219.2" rx="5.7" ry="4.0" fill="#2d4226"/>
<ellipse cx="509.1" cy="230.6" rx="5.7" ry="4.0" fill="#2d4226"/>
<ellipse cx="509.1" cy="213.9" rx="5.7" ry="4.0" fill="#2d4226"/>
<ellipse cx="509.9" cy="234.0" rx="8.4" ry="13.4" fill="#3a5530"/>
</g>
<clipPath id="p2pc"><polygon points="12.8,108.6 34.9,107.3 62.2,146.8 80.6,176.2 114.1,222.6 54.7,240.3 37.9,180.3 19.5,123.4"/><polygon points="68.4,105.3 83.1,104.1 123.4,130.1 171.1,165.3 171.1,178.7 151.9,170.3 103.3,130.1"/></clipPath>
<g clip-path="url(#p2pc)"><rect width="516" height="243" filter="url(#p2m2)" opacity=".8"/><rect width="516" height="243" filter="url(#p2m)" opacity=".6"/></g>
<g filter="url(#p2f)">
<polygon points="69.7,149.3 86.5,147.7 96.2,159.4 78.1,167.3" fill="#36465a"/>
<polygon points="51.0,149.3 68.4,147.7 76.8,161.9 59.7,169.0" fill="#aeb8bc"/>
<polygon points="59.7,169.0 76.8,161.9 77.1,166.9 60.4,173.6" fill="#8b9598"/>
<polygon points="16.9,116.7 27.8,115.8 29.5,123.4 18.6,125.0" fill="#a6b2b6"/>
<polygon points="120.9,140.1 138.5,139.3 151.0,150.2 135.1,153.5" fill="#a3aeb0"/>
<polygon points="23.7,138.5 46.3,135.9 48.0,138.5 25.3,141.5" fill="#9aa6a8"/>
<polygon points="37.9,183.7 79.8,176.2 81.5,179.5 39.9,187.4" fill="#9ea9ab"/>
</g>
<g filter="url(#p2f)">
<polygon points="11.9,77.8 14.3,77.8 14.3,195.8 11.9,195.8" fill="#1d2125"/>
<polygon points="10.7,192.4 16.4,192.4 16.4,197.4 10.7,197.4" fill="#1d2125"/>
<polygon points="1.0,96.6 2.7,96.6 2.7,118.3 1.0,118.3" fill="#23272b"/>
</g>
<rect width="516" height="243" filter="url(#p2gr)" opacity=".12"/>
</svg></div>
  <div class="a" id="tool"></div>
  <svg class="ic" width="2808" height="1700" viewBox="0 0 2808 1700" fill="none" stroke="#141414" stroke-width="3.5">
    <!-- building -->
    <path d="M1820.1 1079V1040a3 3 0 0 1 3-3h15.3a3 3 0 0 1 3 3V1059.9h12.7a3 3 0 0 1 3 3V1079" />
    <path d="M1814.9 1079h47.7" />
    <path d="M1845.6 1070v9" stroke-width="3.2"/>
    <g fill="#141414" stroke="none">
      <rect x="1825.4" y="1043" width="3.6" height="4.1"/><rect x="1832.9" y="1043" width="3.6" height="4.1"/>
      <rect x="1825.4" y="1051.3" width="3.6" height="4.1"/><rect x="1832.9" y="1051.3" width="3.6" height="4.1"/>
      <rect x="1825.4" y="1059.6" width="3.6" height="4.1"/><rect x="1832.9" y="1059.6" width="3.6" height="4.1"/>
      <rect x="1825.4" y="1067.9" width="3.6" height="4.1"/><rect x="1832.9" y="1067.9" width="3.6" height="4.1"/>
    </g>
    <!-- carets -->
    <path d="M1843 1127.2L1830.7 1139.5L1843 1151.8" />
    <path d="M1834.2 1208.3L1846.5 1220.6L1834.2 1232.9" />
    <!-- zoom in -->
    <circle cx="1836.1" cy="1299.4" r="14.95"/>
    <path d="M1846.8 1310.1L1856.4 1319.6M1830.7 1299.4h10.8M1836.1 1294v10.8" stroke-linecap="round"/>
    <!-- zoom out -->
    <circle cx="1836.1" cy="1380.6" r="14.95"/>
    <path d="M1846.8 1391.3L1856.4 1400.8M1830.7 1380.6h10.8" stroke-linecap="round"/>
    <!-- fit -->
    <rect x="1825.7" y="1456.2" width="25.5" height="15.7"/>
    <path d="M1816.6 1456.7V1450a3 3 0 0 1 3-3h7.1M1851 1447h7a3 3 0 0 1 3 3v6.7M1860.9 1471.8v6.8a3 3 0 0 1-3 3h-7M1826.7 1481.6h-7.1a3 3 0 0 1-3-3v-6.8"/>
  </svg>
</div></div>
<div class="clip" id="panel"><div class="in">
  <div class="a box" style="left:1968px;top:-60px;width:611px;height:149.5px"></div>
  <div class="a" style="left:2030.4px;top:-30px;width:107.1px;height:83.5px;background:#fff;border:1.9px solid #e2e2e2;box-sizing:border-box"></div>
  <svg class="ic" width="2808" height="1700" viewBox="0 0 2808 1700">
    <rect x="2036" y="13.8" width="95" height="7.4" fill="#f7f7f7"/><rect x="2036" y="29.2" width="95" height="8.1" fill="#f7f7f7"/>
    <rect x="2037.8" y="6.9" width="11.5" height="0.9" fill="#cfcfcf"/><rect x="2038.4" y="10.1" width="3.6" height="1.1" fill="#a2a2a2"/><rect x="2061.2" y="10.1" width="4.0" height="1.1" fill="#a2a2a2"/><rect x="2084.4" y="10.1" width="3.8" height="1.1" fill="#a2a2a2"/><rect x="2108.2" y="10.1" width="4.0" height="1.1" fill="#a2a2a2"/><rect x="2037.8" y="15.3" width="11.5" height="0.9" fill="#cfcfcf"/><rect x="2038.4" y="18.2" width="3.6" height="1.1" fill="#a2a2a2"/><rect x="2061.2" y="18.2" width="4.0" height="1.1" fill="#a2a2a2"/><rect x="2084.4" y="18.2" width="3.8" height="1.1" fill="#a2a2a2"/><rect x="2108.2" y="18.2" width="4.0" height="1.1" fill="#a2a2a2"/><rect x="2037.8" y="23.5" width="11.5" height="0.9" fill="#cfcfcf"/><rect x="2038.4" y="26.3" width="3.6" height="1.1" fill="#a2a2a2"/><rect x="2061.2" y="26.3" width="4.0" height="1.1" fill="#a2a2a2"/><rect x="2084.4" y="26.3" width="3.8" height="1.1" fill="#a2a2a2"/><rect x="2108.2" y="26.3" width="4.0" height="1.1" fill="#a2a2a2"/><rect x="2037.8" y="31.6" width="11.5" height="0.9" fill="#cfcfcf"/><rect x="2038.4" y="34.4" width="3.6" height="1.1" fill="#a2a2a2"/><rect x="2061.2" y="34.4" width="4.0" height="1.1" fill="#a2a2a2"/><rect x="2084.4" y="34.4" width="3.8" height="1.1" fill="#a2a2a2"/><rect x="2108.2" y="34.4" width="4.0" height="1.1" fill="#a2a2a2"/><rect x="2037.8" y="39.7" width="11.5" height="0.9" fill="#cfcfcf"/><rect x="2038.4" y="42.5" width="3.6" height="1.1" fill="#a2a2a2"/><rect x="2061.2" y="42.5" width="4.0" height="1.1" fill="#a2a2a2"/><rect x="2084.4" y="42.5" width="3.8" height="1.1" fill="#a2a2a2"/><rect x="2108.2" y="42.5" width="4.0" height="1.1" fill="#a2a2a2"/>
    <rect x="2032.3" y="50.1" width="103.3" height="1.7" fill="#3f968c"/>
  </svg>
  <div class="a box" style="left:1968px;top:227px;width:611px;height:128.5px"></div>
  <div class="a cb" style="top:505px"></div>
  <div class="a hr" style="top:598px"></div>
  <div class="a cb" style="top:749.6px"></div>
  <div class="a hr" style="top:842.6px"></div>
  <div class="a" style="left:1968px;top:982px;width:610.5px;height:700px;background:#f8f8f8;border-radius:10px"></div>
  <div class="a box" style="left:1987px;top:1011.0px;width:572.7px;height:104.6px"></div>
  <div class="a box" style="left:1987px;top:1135.0px;width:572.7px;height:104.6px"></div>
  <div class="a box" style="left:1987px;top:1259.0px;width:572.7px;height:104.6px"></div>
  <div class="a box" style="left:1987px;top:1383.0px;width:572.7px;height:104.6px"></div>
  <div class="a box" style="left:1987px;top:1507.0px;width:572.7px;height:104.6px"></div>
  <svg class="ic" width="2808" height="1700" viewBox="0 0 2808 1700" fill="none" stroke="#141414" stroke-width="3.5">
    <path d="M2502.2 286.2L2514.5 298.5L2526.8 286.2"/>
    <defs>
      <g id="eye" stroke-width="16" stroke-linejoin="round"><path d="M128 56C48 56 16 128 16 128s32 72 112 72 112-72 112-72S208 56 128 56Z"/><circle cx="128" cy="128" r="40"/></g>
      <g id="dots" fill="#141414" stroke="none"><circle cx="2036.4" cy="-14.4" r="4.5"/><circle cx="2051.2" cy="-14.4" r="4.5"/><circle cx="2036.4" cy="0" r="4.5"/><circle cx="2051.2" cy="0" r="4.5"/><circle cx="2036.4" cy="14.4" r="4.5"/><circle cx="2051.2" cy="14.4" r="4.5"/></g>
    </defs>
    <use href="#eye" transform="translate(2472 1035.99) scale(.2 .211)"/>
    <use href="#eye" transform="translate(2472 1159.99) scale(.2 .211)"/>
    <use href="#eye" transform="translate(2472 1283.99) scale(.2 .211)"/>
    <use href="#eye" transform="translate(2472 1407.99) scale(.2 .211)"/>
    <use href="#eye" transform="translate(2472 1531.99) scale(.2 .211)"/>
    <use href="#dots" y="1063.1"/>
    <use href="#dots" y="1187.1"/>
    <use href="#dots" y="1311.1"/>
    <use href="#dots" y="1435.1"/>
    <use href="#dots" y="1559.1"/>
  </svg>
</div></div>
<div class="a" id="pline"></div>
<div class="clip" style="left:3px;top:4px;width:2652px;height:1545px"><div class="in" style="left:-3px;top:-4px">
<span class="t" id="t0" style="left:321.60px;top:271.76px;font-size:20.60px;font-weight:700;color:#141414;letter-spacing:-0.141px;-webkit-text-stroke:0.25px #fff">The Nest</span>
<span class="t" id="t1" style="left:321.60px;top:303.66px;font-size:20.60px;font-weight:700;color:#141414;letter-spacing:-0.125px;-webkit-text-stroke:0.25px #fff">381 Southwest Parkway</span>
<span class="t" id="t2" style="left:321.60px;top:331.46px;font-size:20.60px;font-weight:700;color:#141414;letter-spacing:0.053px;-webkit-text-stroke:0.25px #fff">Austin, TX 78735</span>
<span class="t" id="t3" style="left:864.90px;top:271.76px;font-size:20.60px;font-weight:700;color:#141414;letter-spacing:-0.087px;-webkit-text-stroke:0.25px #fff">The Sierra Center</span>
<span class="t" id="t4" style="left:864.20px;top:303.66px;font-size:20.60px;font-weight:700;color:#141414;letter-spacing:-0.035px;-webkit-text-stroke:0.25px #fff">14029 West William Cannon Drive</span>
<span class="t" id="t5" style="left:864.90px;top:331.46px;font-size:20.60px;font-weight:700;color:#141414;letter-spacing:0.046px;-webkit-text-stroke:0.25px #fff">Austin, TX 78735</span>
<span class="t" id="t6" style="left:321.30px;top:413.71px;font-size:15.70px;font-weight:400;color:#666666;letter-spacing:0.602px;-webkit-text-stroke:0.22px #666666">PROPERTY TYPE</span>
<span class="t" id="t7" style="left:321.30px;top:444.56px;font-size:20.60px;font-weight:400;color:#141414;letter-spacing:0.756px;-webkit-text-stroke:0.29px #141414">Office</span>
<span class="t" id="t8" style="left:864.20px;top:444.56px;font-size:20.60px;font-weight:400;color:#141414;letter-spacing:0.876px;-webkit-text-stroke:0.29px #141414">Office</span>
<span class="t" id="t9" style="left:321.30px;top:508.21px;font-size:15.70px;font-weight:400;color:#666666;letter-spacing:0.756px;-webkit-text-stroke:0.22px #666666">BUILDING SIZE</span>
<span class="t" id="t10" style="left:321.30px;top:539.06px;font-size:20.60px;font-weight:400;color:#141414;letter-spacing:0.386px;-webkit-text-stroke:0.29px #141414">688,100 sqft</span>
<span class="t" id="t11" style="left:864.90px;top:539.06px;font-size:20.60px;font-weight:400;color:#141414;letter-spacing:0.786px;-webkit-text-stroke:0.29px #141414">450,090 sqft</span>
<span class="t" id="t12" style="left:321.30px;top:602.71px;font-size:15.70px;font-weight:400;color:#666666;letter-spacing:0.277px;-webkit-text-stroke:0.22px #666666">FLOORS</span>
<span class="t" id="t13" style="left:321.30px;top:633.56px;font-size:20.60px;font-weight:400;color:#141414;letter-spacing:0.000px;-webkit-text-stroke:0.29px #141414">3</span>
<span class="t" id="t14" style="left:864.90px;top:633.56px;font-size:20.60px;font-weight:400;color:#141414;letter-spacing:0.000px;-webkit-text-stroke:0.29px #141414">3</span>
<span class="t" id="t15" style="left:321.30px;top:697.21px;font-size:15.70px;font-weight:400;color:#666666;letter-spacing:0.668px;-webkit-text-stroke:0.22px #666666">PARKING RATIO</span>
<span class="t" id="t16" style="left:321.30px;top:728.06px;font-size:20.60px;font-weight:400;color:#141414;letter-spacing:0.000px;-webkit-text-stroke:0.29px #141414">3<span style="letter-spacing:-1.3px">.</span>1</span>
<span class="t" id="t17" style="left:864.20px;top:728.06px;font-size:20.60px;font-weight:400;color:#141414;letter-spacing:0.000px;-webkit-text-stroke:0.29px #141414"><span style="letter-spacing:-1.3px">1.</span>7</span>
<span class="t" id="t18" style="left:321.30px;top:791.71px;font-size:15.70px;font-weight:400;color:#666666;letter-spacing:0.846px;-webkit-text-stroke:0.22px #666666">BUILDING CLASS</span>
<span class="t" id="t19" style="left:322.00px;top:822.56px;font-size:20.60px;font-weight:400;color:#141414;letter-spacing:0.000px;-webkit-text-stroke:0.29px #141414">A</span>
<span class="t" id="t20" style="left:864.90px;top:822.56px;font-size:20.60px;font-weight:400;color:#141414;letter-spacing:0.000px;-webkit-text-stroke:0.29px #141414">A</span>
<span class="t" id="t21" style="left:321.30px;top:886.21px;font-size:15.70px;font-weight:400;color:#666666;letter-spacing:0.650px;-webkit-text-stroke:0.22px #666666">LOT SIZE</span>
<span class="t" id="t22" style="left:321.30px;top:917.06px;font-size:20.60px;font-weight:400;color:#141414;letter-spacing:0.000px;-webkit-text-stroke:0.29px #141414">6<span style="letter-spacing:-1.3px">.</span>1 AC</span>
<span class="t" id="t23" style="left:864.90px;top:917.06px;font-size:20.60px;font-weight:400;color:#141414;letter-spacing:-0.066px;-webkit-text-stroke:0.29px #141414">8.3 AC</span>
<span class="t" id="t24" style="left:322.00px;top:980.71px;font-size:15.70px;font-weight:400;color:#666666;letter-spacing:0.569px;-webkit-text-stroke:0.22px #666666">YEAR BUILT</span>
<span class="t" id="t25" style="left:321.30px;top:1011.56px;font-size:20.60px;font-weight:400;color:#141414;letter-spacing:0.124px;-webkit-text-stroke:0.29px #141414">2001</span>
<span class="t" id="t26" style="left:864.20px;top:1011.56px;font-size:20.60px;font-weight:400;color:#141414;letter-spacing:0.457px;-webkit-text-stroke:0.29px #141414">2010</span>
<span class="t" id="t27" style="left:322.00px;top:1075.21px;font-size:15.70px;font-weight:400;color:#666666;letter-spacing:0.479px;-webkit-text-stroke:0.22px #666666">YEAR RENOVATED</span>
<span class="t" id="t28" style="left:321.30px;top:1106.06px;font-size:20.60px;font-weight:400;color:#141414;letter-spacing:0.057px;-webkit-text-stroke:0.29px #141414">2015</span>
<span class="t" id="t29" style="left:864.20px;top:1106.06px;font-size:20.60px;font-weight:400;color:#141414;letter-spacing:0.628px;-webkit-text-stroke:0.29px #141414">N/A</span>
<span class="t" id="t30" style="left:322.00px;top:1169.71px;font-size:15.70px;font-weight:400;color:#666666;letter-spacing:0.742px;-webkit-text-stroke:0.22px #666666">AMENITIES</span>
<span class="t" id="t31" style="left:322.00px;top:1200.56px;font-size:20.60px;font-weight:400;color:#141414;letter-spacing:0.279px;-webkit-text-stroke:0.29px #141414">Wi-Fi, On-site management, Weekly Cleaning</span>
<span class="t" id="t32" style="left:864.20px;top:1200.56px;font-size:20.60px;font-weight:400;color:#141414;letter-spacing:0.185px;-webkit-text-stroke:0.29px #141414">Gym, Grab and Go Deli, Tenant Lounge</span>
<span class="t" id="t33" style="left:2197.80px;top:-10.40px;font-size:32.96px;font-weight:700;color:#141414;letter-spacing:1.219px;-webkit-text-stroke:0.40px #fff">Default</span>
<span class="t" id="t34" style="left:1968.00px;top:165.19px;font-size:29.66px;font-weight:400;color:#6a6a6a;letter-spacing:0.691px;-webkit-text-stroke:0.42px #6a6a6a">Buildings Per Page</span>
<span class="t" id="t35" style="left:2001.60px;top:272.26px;font-size:35.60px;font-weight:400;color:#141414;letter-spacing:0.000px;-webkit-text-stroke:0.50px #141414">2</span>
<span class="t" id="t36" style="left:1968.00px;top:431.29px;font-size:29.66px;font-weight:400;color:#6a6a6a;letter-spacing:0.844px;-webkit-text-stroke:0.42px #6a6a6a">Building Name</span>
<span class="t" id="t37" style="left:2062.80px;top:510.88px;font-size:34.40px;font-weight:700;color:#141414;letter-spacing:-0.129px;-webkit-text-stroke:0.41px #fff">Hide building name</span>
<span class="t" id="t38" style="left:1967.70px;top:675.89px;font-size:29.66px;font-weight:400;color:#6a6a6a;letter-spacing:1.127px;-webkit-text-stroke:0.42px #6a6a6a">Images</span>
<span class="t" id="t39" style="left:2062.80px;top:756.38px;font-size:34.40px;font-weight:700;color:#141414;letter-spacing:0.059px;-webkit-text-stroke:0.41px #fff">Hide images</span>
<span class="t" id="t40" style="left:1968.00px;top:920.19px;font-size:29.66px;font-weight:400;color:#6a6a6a;letter-spacing:0.727px;-webkit-text-stroke:0.42px #6a6a6a">Field Order</span>
<span class="t" id="t41" style="left:2119.60px;top:1045.70px;font-size:32.96px;font-weight:700;color:#141414;letter-spacing:1.205px;-webkit-text-stroke:0.40px #fff">Property Type</span>
<span class="t" id="t42" style="left:2119.60px;top:1169.70px;font-size:32.96px;font-weight:700;color:#141414;letter-spacing:0.427px;-webkit-text-stroke:0.40px #fff">Building Size</span>
<span class="t" id="t43" style="left:2119.60px;top:1293.70px;font-size:32.96px;font-weight:700;color:#141414;letter-spacing:0.579px;-webkit-text-stroke:0.40px #fff">Floors</span>
<span class="t" id="t44" style="left:2119.60px;top:1417.70px;font-size:32.96px;font-weight:700;color:#141414;letter-spacing:0.532px;-webkit-text-stroke:0.40px #fff">Parking Ratio</span>
<span class="t" id="t45" style="left:2120.60px;top:1541.70px;font-size:32.96px;font-weight:700;color:#141414;letter-spacing:0.317px;-webkit-text-stroke:0.40px #fff">Building Class</span>
<span class="t" id="t46" style="left:1811.90px;top:982.52px;font-size:23.60px;font-weight:400;color:#141414;letter-spacing:0.495px;transform:scaleX(1.100);transform-origin:0 50%;-webkit-text-stroke:0.75px #141414">3/55</span>
</div></div>

</body></html>
